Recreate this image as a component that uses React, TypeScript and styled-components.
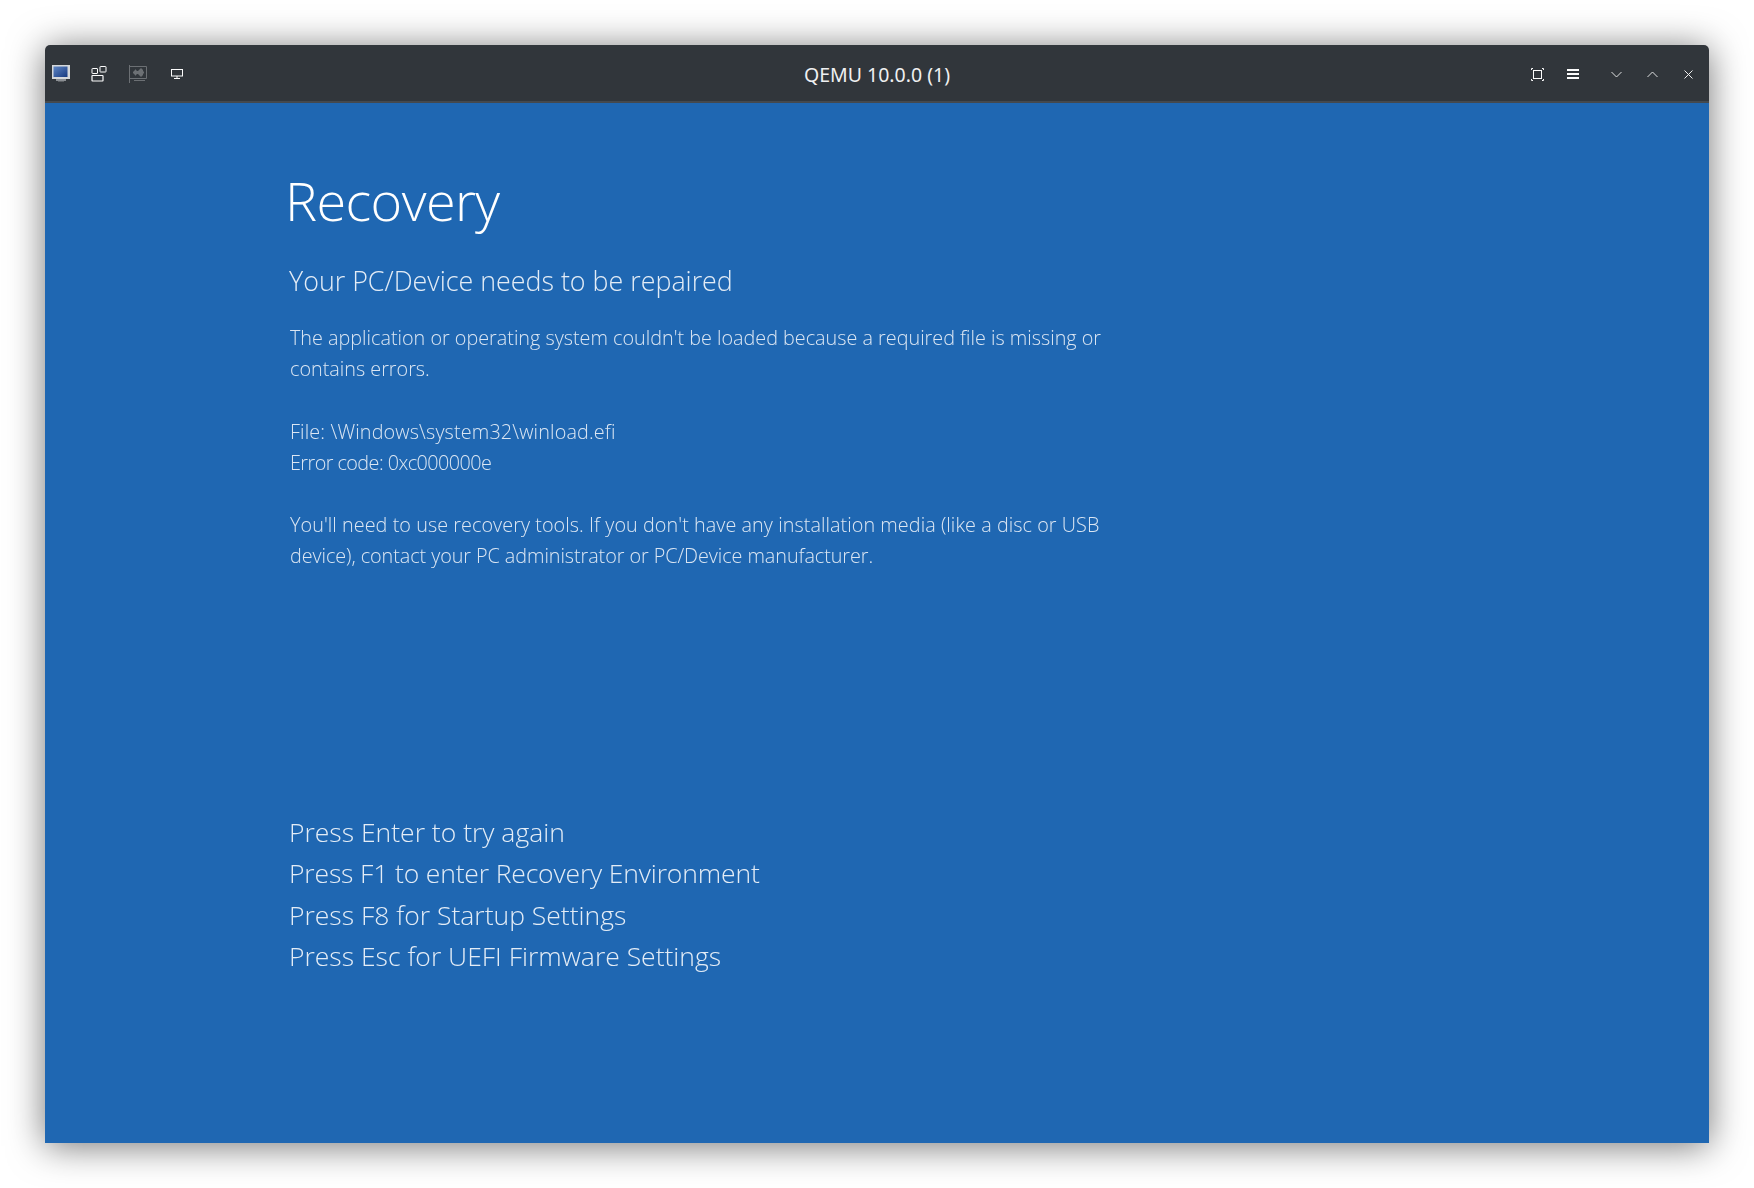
import styled, { createGlobalStyle } from 'styled-components';

const GlobalStyle = createGlobalStyle`
  html, body {
    margin: 0;
    padding: 0;
    background: #ffffff;
    overflow: hidden;
  }
`;

const Desktop = styled.div`
  width: 1754px;
  height: 1188px;
  padding: 45px;
  box-sizing: border-box;
`;

const Window = styled.div`
  width: 1664px;
  height: 1098px;
  display: flex;
  flex-direction: column;
  border-radius: 5px 5px 0 0;
  overflow: hidden;
  box-shadow: 0 3px 36px rgba(0, 0, 0, 0.55);
`;

const TitleBar = styled.div`
  height: 54px;
  padding-top: 2px;
  flex: none;
  display: flex;
  align-items: center;
  justify-content: space-between;
  background: #31363b;
  border-bottom: 2px solid #44494e;
  border-top: 1px solid #44494e;
  box-sizing: content-box;
  margin-top: -1px;
  position: relative;
`;

const IconGroup = styled.div`
  display: flex;
  align-items: center;
`;

const RightIconGroup = styled(IconGroup)`
  padding-right: 3px;
`;

const IconSlot = styled.div<{ $w: number }>`
  width: ${(p) => p.$w}px;
  height: 24px;
  display: flex;
  align-items: center;
  justify-content: center;
`;

const Title = styled.div`
  position: absolute;
  left: 0;
  right: 0;
  top: 18px;
  text-align: center;
  font: 400 19.5px/24px 'Noto Sans', sans-serif;
  color: #eff0f1;
`;

const Screen = styled.div`
  flex: 1;
  background: #1f67b2;
  padding: 65px 0 0 241px;
  color: #ffffff;
  font-family: 'Open Sans', 'Noto Sans', sans-serif;
  filter: blur(0.4px);
`;

const Heading = styled.h1`
  margin: 0 0 0 -1px;
  font-weight: 300;
  font-size: 54px;
  line-height: 64px;
  letter-spacing: -0.6px;
`;

const SubHeading = styled.h2`
  margin: 31px 0 0 3px;
  font-weight: 300;
  font-size: 26.84px;
  line-height: 36px;
  color: #e3ecf6;
`;

const Body = styled.div`
  width: 840px;
  margin: 23px 0 0 4px;
  font-weight: 300;
  font-size: 19.8px;
  line-height: 31.2px;
  color: #dbe6f3;
`;

const Para = styled.p`
  margin: 0 0 31.2px;
`;

const Line = styled.div<{ $track: number }>`
  letter-spacing: ${(p) => p.$track}px;
`;

const Options = styled.div`
  margin: 240px 0 0 3px;
  font-weight: 300;
  font-size: 26.5px;
  line-height: 41.6px;
  color: #e3ecf6;
`;

function VmIcon() {
  return (
    <svg width="20" height="20" viewBox="0 0 20 20">
      <defs>
        <linearGradient id="scr" x1="0" y1="0" x2="1" y2="1">
          <stop offset="0" stopColor="#5f86c4" />
          <stop offset="1" stopColor="#173a80" />
        </linearGradient>
      </defs>
      <rect x="1" y="1" width="18" height="14" fill="#d5d8da" />
      <rect x="2.5" y="2.5" width="14" height="10.5" fill="url(#scr)" />
      <rect x="5" y="15" width="10" height="2" fill="#8b8f93" />
      <rect x="7" y="17" width="6" height="1" fill="#5c6064" />
    </svg>
  );
}

function WindowsIcon() {
  return (
    <svg width="16" height="16" viewBox="0 0 16 16" fill="none" stroke="#fcfcfc" strokeWidth="1">
      <rect x="1" y="2.5" width="5.5" height="5" rx="0.5" />
      <rect x="9" y="0.5" width="6" height="5.5" rx="0.5" />
      <rect x="1" y="9.5" width="11" height="5.5" rx="0.5" strokeWidth="1.2" />
    </svg>
  );
}

function AudioIcon() {
  const bars = [
    [5, 2],
    [6, 4],
    [7, 6],
    [8, 4],
    [9, 3],
    [10, 4],
    [11, 6],
    [12, 8],
    [13, 8],
    [14, 6],
    [15, 2],
  ];
  return (
    <svg width="18" height="18" viewBox="0 0 18 18" fill="none" stroke="#6c7074" strokeWidth="1">
      <path d="M0.500 0v18M0.500 1.500h17v12h-17M5 15.500h11" />
      {bars.map(([x, h]) => (
        <rect key={x} x={x - 1} y={7.5 - h / 2} width="1" height={h} fill="#6c7074" stroke="none" />
      ))}
    </svg>
  );
}

function MonitorIcon() {
  return (
    <svg width="12" height="10" viewBox="0 0 12 10" fill="none" stroke="#fcfcfc" strokeWidth="1">
      <rect x="0.500" y="0.500" width="11" height="6.500" />
      <path d="M6 7v2.500M3 9.500h6" />
    </svg>
  );
}

function FullscreenIcon() {
  return (
    <svg width="13" height="13" viewBox="0 0 13 13" fill="none" stroke="#fcfcfc" strokeWidth="1">
      <rect x="2.500" y="2.500" width="8" height="8" />
      <path d="M0.500 2v-1.500h1.500M11 0.500h1.500v1.500M0.500 11v1.500h1.500M12.500 11v1.500h-1.500" />
    </svg>
  );
}

function MenuIcon() {
  return (
    <svg width="12" height="11" viewBox="0 0 12 11" fill="#fcfcfc">
      <rect x="0" y="0" width="12" height="2" />
      <rect x="0" y="4" width="12" height="2" />
      <rect x="0" y="8" width="12" height="2" />
    </svg>
  );
}

function ChevronDownIcon() {
  return (
    <svg width="11" height="7" viewBox="0 0 11 7" fill="none" stroke="#dfe0e1" strokeWidth="1">
      <path d="M0.500 1l5 5 5-5" />
    </svg>
  );
}

function ChevronUpIcon() {
  return (
    <svg width="11" height="7" viewBox="0 0 11 7" fill="none" stroke="#dfe0e1" strokeWidth="1">
      <path d="M0.500 6l5-5 5 5" />
    </svg>
  );
}

function CloseIcon() {
  return (
    <svg width="9" height="9" viewBox="0 0 9 9" fill="none" stroke="#eeeeee" strokeWidth="1">
      <path d="M0.500 0.500l8 8M8.500 0.500l-8 8" />
    </svg>
  );
}

export default function App() {
  return (
    <>
      <GlobalStyle />
      <Desktop>
        <Window>
          <TitleBar>
            <IconGroup>
              <IconSlot $w={32}><VmIcon /></IconSlot>
              <IconSlot $w={43}><WindowsIcon /></IconSlot>
              <IconSlot $w={36}><AudioIcon /></IconSlot>
              <IconSlot $w={42}><MonitorIcon /></IconSlot>
            </IconGroup>
            <Title>QEMU 10.0.0 (1)</Title>
            <RightIconGroup>
              <IconSlot $w={36}><FullscreenIcon /></IconSlot>
              <IconSlot $w={36}><MenuIcon /></IconSlot>
              <IconSlot $w={7} />
              <IconSlot $w={36}><ChevronDownIcon /></IconSlot>
              <IconSlot $w={36}><ChevronUpIcon /></IconSlot>
              <IconSlot $w={36}><CloseIcon /></IconSlot>
            </RightIconGroup>
          </TitleBar>
          <Screen>
            <Heading>Recovery</Heading>
            <SubHeading>Your PC/Device needs to be repaired</SubHeading>
            <Body>
              <Para>The application or operating system couldn't be loaded because a required file is missing or contains errors.</Para>
              <Para>
                <Line $track={0.15}>File: \Windows\system32\winload.efi</Line>
                <Line $track={-0.55}>Error code: 0xc000000e</Line>
              </Para>
              <Para>
                <Line $track={0.06}>You'll need to use recovery tools. If you don't have any installation media (like a disc or USB</Line>
                <Line $track={-0.06}>device), contact your PC administrator or PC/Device manufacturer.</Line>
              </Para>
            </Body>
            <Options>
              <div>Press Enter to try again</div>
              <Line $track={-0.15}>Press F1 to enter Recovery Environment</Line>
              <div>Press F8 for Startup Settings</div>
              <div>Press Esc for UEFI Firmware Settings</div>
            </Options>
          </Screen>
        </Window>
      </Desktop>
    </>
  );
}
